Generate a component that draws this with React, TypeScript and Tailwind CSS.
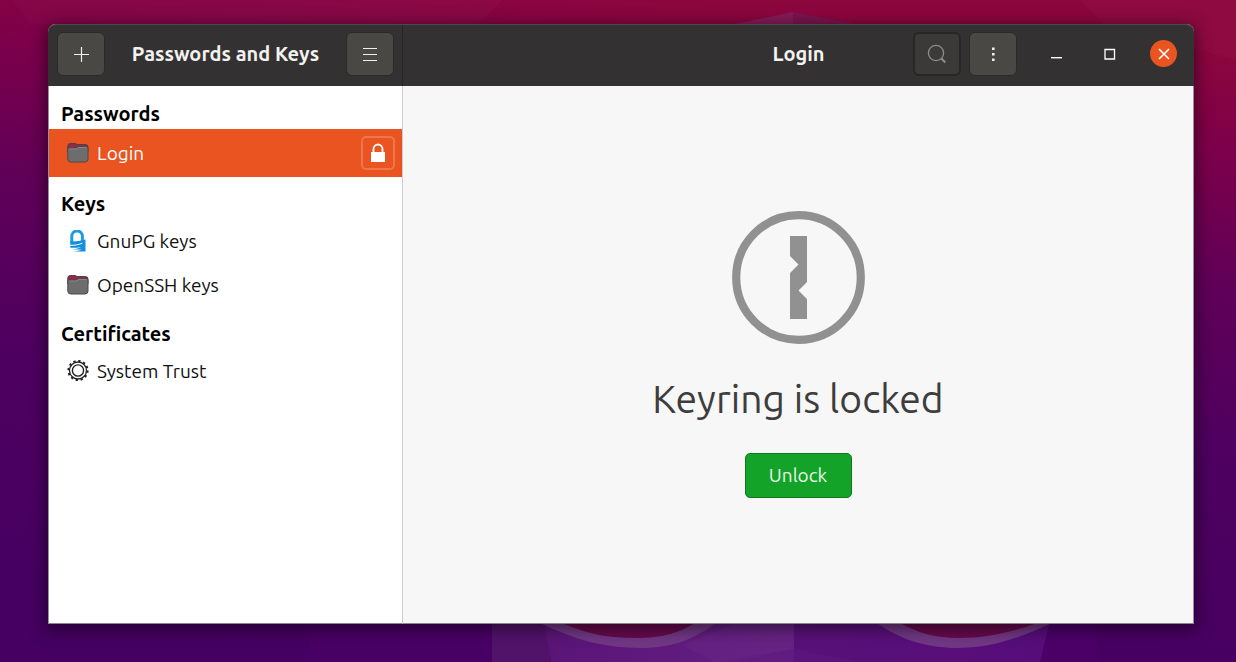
import React, { useState } from 'react';

type Item = { id: string; label: string; icon: React.ReactNode };
type Section = { title: string; items: Item[] };

const FolderIcon: React.FC = () => (
  <svg viewBox="0 0 22 22" className="w-[22px] h-[22px] shrink-0" aria-hidden="true">
    <path d="M.8 4a2.500 2.500 0 0 1 2.500-2.500h5.200L10 2.500h8.500A2.500 2.500 0 0 1 21 5V10H.8z" fill="#8c2d45" stroke="#5a3a45" />
    <path d="M.8 7A1.500 1.500 0 0 1 2.300 6h7.200L11 4.500h8a2 2 0 0 1 2 2V17a3 3 0 0 1-3 3H3.800a3 3 0 0 1-3-3z" fill="#6e6d6d" stroke="#4c484b" />
    <path d="M1.800 7h8.200L11.500 5.500h8" fill="none" stroke="#928b8d" strokeWidth="0.800" />
  </svg>
);

const GnupgIcon: React.FC = () => (
  <svg viewBox="0 0 22 22" className="w-[22px] h-[22px] shrink-0" aria-hidden="true">
    <path d="M4.800 13V6.300a5.300 5.300 0 0 1 10.600 0V12" fill="none" stroke="#1d9be2" strokeWidth="3" />
    <path d="M3.300 11.200C7 12 12 11 18.500 9.500V21.500H6c4-.2 6.500-.9 8.500-2H4.500c4-.4 7-1.200 9.500-2.600-3.500.9-7 1.100-10.700.8z" fill="#1390dc" />
    <path d="M2.500 15.300c5 .2 9-.4 13-2.200" fill="none" stroke="#fff" strokeWidth="1" />
  </svg>
);

const TrustIcon: React.FC = () => (
  <svg viewBox="0 0 22 22" className="w-[22px] h-[22px] shrink-0" aria-hidden="true">
    <circle cx="11" cy="10.500" r="9.600" fill="none" stroke="#222" strokeWidth="2" strokeDasharray="2.300 2.726" />
    <circle cx="11" cy="10.500" r="8.500" fill="#fff" stroke="#222" strokeWidth="1.300" />
    <circle cx="11" cy="10.500" r="5.600" fill="none" stroke="#222" strokeWidth="1.400" />
  </svg>
);

const Wallpaper: React.FC = () => (
  <svg
    viewBox="0 0 1236 662"
    preserveAspectRatio="none"
    className="absolute inset-0 w-full h-full"
    aria-hidden="true"
  >
    <defs>
      <linearGradient id="sky" gradientUnits="userSpaceOnUse" x1="640" y1="0" x2="580" y2="662">
        <stop offset="0" stopColor="#8c063e" />
        <stop offset="0.150" stopColor="#7c004a" />
        <stop offset="0.350" stopColor="#600058" />
        <stop offset="0.600" stopColor="#4e0060" />
        <stop offset="1" stopColor="#450061" />
      </linearGradient>
      <linearGradient id="face" gradientUnits="userSpaceOnUse" x1="492" y1="0" x2="1047" y2="0">
        <stop offset="0" stopColor="#54136c" />
        <stop offset="0.150" stopColor="#5c167a" />
        <stop offset="0.543" stopColor="#652083" />
        <stop offset="0.544" stopColor="#591179" />
        <stop offset="1" stopColor="#560d7a" />
      </linearGradient>
    </defs>
    <rect width="1236" height="662" fill="url(#sky)" />
    <path d="M12 0H503L478 24H30z" fill="#fff" fillOpacity="0.020" />
    <path d="M1080 0H1236V60L1105 24z" fill="#fff" fillOpacity="0.020" />
    <path d="M793 12L735 24H855z" fill="#7c1450" />
    <path d="M793 12V24H735z" fill="#861a58" />
    <path d="M303 624L314 662H492V600H303z" fill="#4b0066" fillOpacity="0.600" />
    <path d="M1040 600H1097V662H1030z" fill="#4b0068" />
    <path d="M492 600H1055L1040 662H492z" fill="url(#face)" />
    <path d="M492 600H540L551 662H492z" fill="#51126a" />
    <path d="M682 645L794 600V649L715 662z" fill="#6c2a88" fillOpacity="0.350" />
    <path d="M794 649L860 662H735z" fill="#5d1880" fillOpacity="0.500" />
    <path d="M540 623C575 640 605 648 640 648S695 638 716 623z" fill="#713784" />
    <path d="M562 623C585 633 605 638 635 638S680 632 695 623z" fill="#650a4c" />
    <path d="M877 623C898 638 925 648 957 648S1015 640 1052 623z" fill="#713784" />
    <path d="M900 623C918 633 935 638 960 638S1010 633 1037 623z" fill="#650a4c" />
  </svg>
);

const sections: Section[] = [
  { title: 'Passwords', items: [{ id: 'login', label: 'Login', icon: <FolderIcon /> }] },
  {
    title: 'Keys',
    items: [
      { id: 'gnupg', label: 'GnuPG keys', icon: <GnupgIcon /> },
      { id: 'openssh', label: 'OpenSSH keys', icon: <FolderIcon /> },
    ],
  },
  { title: 'Certificates', items: [{ id: 'trust', label: 'System Trust', icon: <TrustIcon /> }] },
];

const headerButton =
  'w-12 h-11 rounded-md border border-[#2b2929] bg-[#4a4845] text-[#eeeeec] flex items-center justify-center';

const App: React.FC = () => {
  const [selected, setSelected] = useState('login');

  return (
    <div className="relative min-h-screen flex flex-col pt-6 pl-12 pr-[42px] pb-[38px] bg-[#450061] font-[Ubuntu,'Noto_Sans',sans-serif] text-[19px]">
      <Wallpaper />

      <div className="relative flex-1 flex rounded-t-lg shadow-[0_3px_16px_2px_rgba(0,0,0,0.5)]">
        {/* Sidebar */}
        <aside className="w-[355px] shrink-0 flex flex-col border-x border-b border-l-[#9a8f9c] border-b-[#8d8290] border-r-[#cdcdcd] rounded-tl-lg bg-white">
          <header className="h-[62px] -mx-px pl-[9px] pr-2 pb-1 flex items-center justify-between rounded-tl-lg bg-[#333131] border-t border-t-[#4b4949] border-r border-r-[#262424] text-[#f2f2f0]">
            <button aria-label="Add" className={headerButton}>
              <svg viewBox="0 0 16 16" className="w-4 h-4" fill="none" stroke="currentColor" aria-hidden="true">
                <path d="M8.500 1v15M1 8.500h15" strokeWidth="1.200" />
              </svg>
            </button>
            <h1 className="font-bold text-[20px] leading-6 whitespace-nowrap">Passwords and Keys</h1>
            <button aria-label="Main menu" className={headerButton}>
              <svg viewBox="0 0 16 16" className="w-4 h-4" fill="none" stroke="currentColor" aria-hidden="true">
                <path d="M1 2.500h14M1 8.500h14M1 14.500h14" strokeWidth="1.200" />
              </svg>
            </button>
          </header>

          <nav className="flex-1 pt-px">
            {sections.map(section => (
              <section key={section.title}>
                <h2 className="pt-[15px] px-3 text-[20px] leading-6 font-bold text-black">{section.title}</h2>
                <ul className="mt-[3px]">
                  {section.items.map(item => {
                    const active = selected === item.id;
                    return (
                      <li
                        key={item.id}
                        className={`flex items-center ${active ? 'h-12 bg-[#e95420] text-white' : 'h-11 text-[#111]'}`}
                      >
                        <button
                          onClick={() => setSelected(item.id)}
                          className="flex-1 h-full pl-[18px] flex items-center gap-2 text-left"
                        >
                          {item.icon}
                          {item.label}
                        </button>
                        {active && (
                          <button
                            aria-label="Unlock keyring"
                            className="w-[34px] h-[34px] mr-[7px] rounded-[5px] border-2 border-white/20 flex items-center justify-center"
                          >
                            <svg viewBox="0 0 16 20" className="w-4 h-5" aria-hidden="true">
                              <path d="M3.500 10V6a4.500 4.500 0 0 1 9 0v4" fill="none" stroke="#fff" strokeWidth="1.800" />
                              <path d="M1 9h14v10H1z" fill="#fff" />
                            </svg>
                          </button>
                        )}
                      </li>
                    );
                  })}
                </ul>
              </section>
            ))}
          </nav>
        </aside>

        {/* Content pane */}
        <div className="flex-1 flex flex-col border-r border-b border-r-[#9a8f9c] border-b-[#8d8290] rounded-tr-lg bg-[#f7f7f7]">
          <header className="h-[62px] -mr-px pb-1 grid grid-cols-[1fr_auto_1fr] items-center rounded-tr-lg bg-[#333131] border-t border-[#4b4949] text-[#f2f2f0]">
            <h2 className="col-start-2 font-bold text-[20px] leading-6">Login</h2>
            <div className="flex items-center justify-end pr-[17px]">
              <button aria-label="Search" className="w-12 h-11 mr-2 rounded-md border-2 border-[#282626] bg-[#3b3a39] text-[#8e8d8b] flex items-center justify-center">
                <svg viewBox="0 0 20 20" className="w-5 h-5" fill="none" stroke="currentColor" aria-hidden="true">
                  <circle cx="9" cy="9" r="7.600" strokeWidth="1.300" />
                  <path d="M14.300 14.500l4 4" strokeWidth="2" />
                </svg>
              </button>
              <button aria-label="More options" className={headerButton}>
                <svg viewBox="0 0 16 16" className="w-4 h-4" fill="currentColor" aria-hidden="true">
                  <path d="M7 1.500h2.600v2.600H7zM7 7h2.600v2.600H7zM7 12.500h2.600v2.600H7z" />
                </svg>
              </button>
              <button aria-label="Minimize" className="w-[26px] h-[26px] ml-[27px] flex items-center justify-center">
                <svg viewBox="0 0 12 12" className="w-3 h-3" aria-hidden="true">
                  <path d="M0 9h11v1.400H0z" fill="#fff" />
                </svg>
              </button>
              <button aria-label="Maximize" className="w-[26px] h-[26px] ml-[27px] flex items-center justify-center">
                <svg viewBox="0 0 12 12" className="w-3 h-3" aria-hidden="true">
                  <path d="M1 1.500h9.500v9.500H1z" fill="none" stroke="#fff" strokeWidth="1.300" />
                </svg>
              </button>
              <button aria-label="Close" className="w-[27px] h-[27px] ml-[27px] rounded-full bg-[#e95420] flex items-center justify-center">
                <svg viewBox="0 0 12 12" className="w-3 h-3" aria-hidden="true">
                  <path d="M1 1l10 10M11 1L1 11" fill="none" stroke="#fff" strokeWidth="1.600" />
                </svg>
              </button>
            </div>
          </header>

          <main className="flex-1 flex flex-col items-center justify-center">
            <svg viewBox="0 0 133 133" className="w-[133px] h-[133px]" aria-hidden="true">
              <circle cx="66.500" cy="66.500" r="62.300" fill="none" stroke="#919191" strokeWidth="8.200" />
              <path d="M58 25h17v46l-8.500 8.500L75 88v20H58V62l8.500-8.500L58 45z" fill="#919191" />
            </svg>
            <p className="mt-7 mb-7 text-[39px] leading-[53px] text-[#3d3d3d]">Keyring is locked</p>
            <button className="w-[107px] h-[45px] rounded-[5px] border border-[#0d7a1c] bg-[#14a329] text-[#e9f6ea]">
              Unlock
            </button>
          </main>
        </div>
      </div>
    </div>
  );
};

export default App;
